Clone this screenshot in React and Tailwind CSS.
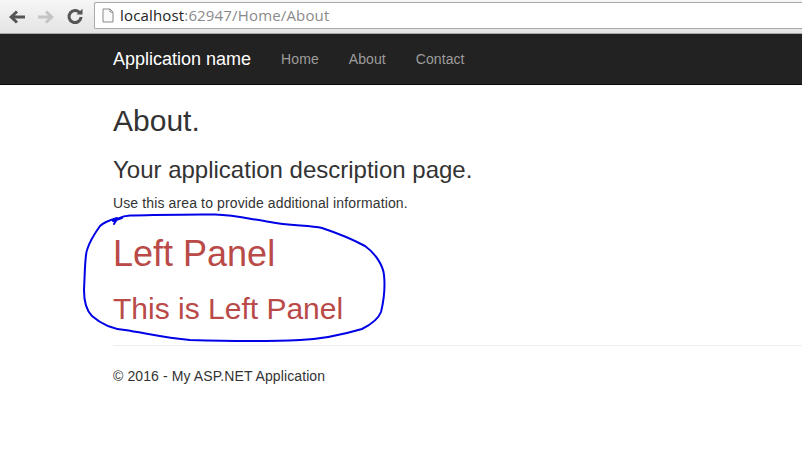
import React from "react";

function Arrow({ color, flip }) {
  return (
    <svg width="18" height="16" viewBox="0 0 18 16" style={flip ? { transform: "scaleX(-1)" } : undefined}>
      <path d="M17 8H4M9 2.5L3.2 8l5.8 5.5" fill="none" stroke={color} strokeWidth="3" />
    </svg>
  );
}

export default function App() {
  return (
    <div className="relative w-[802px] h-[465px] overflow-hidden bg-white font-['Liberation_Sans',Arial,sans-serif] text-[#333333]">
      <div className="h-[34px] flex items-center bg-gradient-to-b from-[#f6f6f6] to-[#e4e4e4] border-b border-[#a8a8a8]">
        <div className="ml-[8px] flex items-center gap-[11px] w-[78px] shrink-0">
          <Arrow color="#555555" />
          <Arrow color="#c4c4c4" flip />
          <svg width="18" height="18" viewBox="0 0 18 18">
            <path d="M14 5.2A6 6 0 1 0 15 9" fill="none" stroke="#555555" strokeWidth="3" />
            <path d="M10.5 6.5H16.5V0.8Z" fill="#555555" />
          </svg>
        </div>
        <div className="ml-[8px] flex-1 h-[27px] mb-[3px] flex items-center bg-white border border-[#a9a9a9] border-r-0 rounded-l-[2px]">
          <svg className="ml-[7px]" width="12" height="15" viewBox="0 0 12 15">
            <path d="M1 1H8L11 4V14H1Z M8 1V4H11" fill="#fafafa" stroke="#8a8a8a" strokeWidth="1" />
          </svg>
          <span className="ml-[6px] text-[15px] leading-none tracking-[0.16px] font-['Open_Sans',sans-serif]">
            <span className="text-[#222222]">localhost</span>
            <span className="text-[#8a8a8a]">:62947/Home/About</span>
          </span>
        </div>
      </div>

      <nav className="h-[51px] bg-[#222222] border-b border-[#080808] pl-[113px] flex items-center">
        <span className="text-white text-[18px] leading-none">Application name</span>
        <div className="ml-[30px] flex gap-[30px] text-[14px] tracking-[0.08px] text-[#9d9d9d] leading-none">
          <span>Home</span>
          <span>About</span>
          <span>Contact</span>
        </div>
      </nav>

      <main className="pl-[113px]">
        <h2 className="mt-[19px] text-[30px] leading-[33px] font-medium">About.</h2>
        <h3 className="mt-[20px] text-[24px] leading-[26px] font-medium">Your application description page.</h3>
        <p className="mt-[10px] text-[14px] leading-[20px] tracking-[0.125px]">Use this area to provide additional information.</p>
        <div className="text-[#b94a48]">
          <div className="mt-[21px] text-[36px] leading-[40px]">Left Panel</div>
          <div className="mt-[18px] text-[30px] leading-[34px]">This is Left Panel</div>
        </div>
        <hr className="mt-[19px] border-t border-[#eeeeee]" />
        <footer className="mt-[20px] text-[14px] leading-[20px] tracking-[0.1px]">© 2016 - My ASP.NET Application</footer>
      </main>

      <svg className="absolute left-0 top-0 pointer-events-none" width="802" height="465" fill="none">
        <path
          d="M113 221 L122 218 M114 224 C116 218 122 216 130 215.5 C160 215 190 214 215 214.5 C235 215 250 219 270 222 C290 226 310 225 322 228 C340 234 352 239 365 246 C375 253 383 265 384 275 C385 285 384 300 381 312 C378 320 370 325 362 329 C345 334 325 339 300 340 C260 342 220 341 190 340 C165 338 145 333 125 330 C112 329 100 323 92 316 C86 310 84 300 84 290 C85 270 85 255 87 250 C90 240 95 233 100 226 C104 222 110 220 117 218"
          stroke="#0000e6"
          strokeWidth="2"
          strokeLinecap="round"
        />
      </svg>
    </div>
  );
}
